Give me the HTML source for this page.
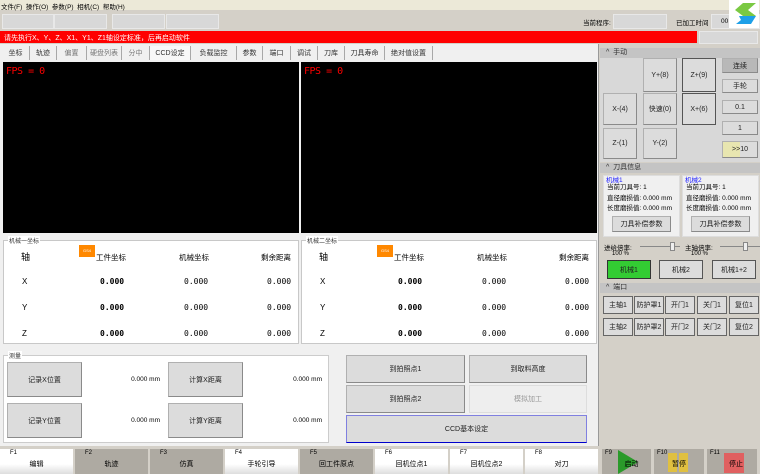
<!DOCTYPE html>
<html><head><meta charset="utf-8"><style>
*{box-sizing:border-box;margin:0;padding:0}
body{width:760px;height:474px;overflow:hidden;background:#d4d0c8;font-family:"Liberation Sans","Noto Sans CJK SC",sans-serif;font-size:7px;color:#000;position:relative}
.a{position:absolute}
.box{position:absolute;background:#d8d8d8;border:1px solid #e8e8e8}
.btn{position:absolute;background:#dcdcdc;border:1px solid #8a8a8a;border-top-color:#b0b0b0;border-left-color:#b0b0b0;display:flex;align-items:center;justify-content:center;font-size:7px;color:#222}
.tab{position:absolute;top:46px;height:14px;border-right:1px solid #a8a8a8;display:flex;align-items:center;justify-content:center;font-size:7px;color:#333}
.vid{position:absolute;background:#000;top:62px;height:171px}
.fps{position:absolute;left:3px;top:4px;color:#f00;font-size:10px;font-family:"DejaVu Sans Mono","Liberation Mono",monospace;letter-spacing:-0.5px}
.grp{position:absolute;border:1px solid #c8c8c8;background:#fff}
.gl{position:absolute;top:-5px;left:4px;background:#fff;font-size:6px;padding:0 1px;color:#333}
.mono{font-family:"DejaVu Sans Mono","Liberation Mono",monospace;font-size:8px;position:absolute}
.hd{position:absolute;left:600px;width:160px;height:10px;background:#c4c4c4;font-size:7px;padding-left:6px;line-height:10px;color:#333}
.f{position:absolute;top:449px;height:25px;width:73px;font-size:7px}
.fw{background:linear-gradient(#fff 60%,#ddd)}
.fg{background:#aeaaa2}
.f span{position:absolute;left:10px;top:1px;font-size:6px}
.f b{font-weight:normal;position:absolute;top:10px;left:0;right:0;text-align:center}
</style></head><body>
<div class="a" style="left:0;top:0;width:760px;height:10px;background:#ece9d8"></div>
<div class="a" style="left:1px;top:1px;font-size:6.5px;white-space:nowrap">文件(F)&nbsp; 操作(O)&nbsp; 参数(P)&nbsp; 相机(C)&nbsp; 帮助(H)</div>
<div class="box" style="left:2px;top:14px;width:52px;height:15px"></div>
<div class="box" style="left:54px;top:14px;width:53px;height:15px"></div>
<div class="box" style="left:112px;top:14px;width:53px;height:15px"></div>
<div class="box" style="left:166px;top:14px;width:53px;height:15px"></div>
<div class="a" style="left:583px;top:17px;font-size:6.5px">当前程序:</div>
<div class="box" style="left:613px;top:14px;width:54px;height:15px"></div>
<div class="a" style="left:676px;top:17px;font-size:6.5px">已加工时间</div>
<div class="box" style="left:711px;top:14px;width:49px;height:15px;font-size:6.5px;padding:3px 0 0 9px">00</div>
<div class="a" style="left:729px;top:0;width:30px;height:28px;background:#fff"></div>
<svg class="a" style="left:733px;top:3px" width="23" height="22"><polygon points="10,0 23,0 15,7 23,13 10,13 2,7" fill="#7ac943"/><polygon points="6,13 23,13 18,21 3,21 8,17" fill="#1ea0e8"/></svg>
<div class="a" style="left:0;top:31px;width:697px;height:12px;background:#f00;color:#fff;font-size:7px;padding:2px 0 0 4px">请先执行X、Y、Z、X1、Y1、Z1轴设定标准，后再启动软件</div>
<div class="box" style="left:699px;top:31px;width:59px;height:13px"></div>
<div class="a" style="left:0;top:44px;width:599px;height:402px;background:#f0f0f0;border-right:1px solid #999"></div>
<div class="tab" style="left:2px;width:28px">坐标</div>
<div class="tab" style="left:30px;width:27px">轨迹</div>
<div class="tab" style="left:57px;width:30px;color:#777">偏置</div>
<div class="tab" style="left:87px;width:35px;color:#777">硬盘列表</div>
<div class="tab" style="left:122px;width:28px;color:#777">分中</div>
<div class="tab" style="left:150px;width:41px;background:#f8f8f8">CCD设定</div>
<div class="tab" style="left:191px;width:46px">负载监控</div>
<div class="tab" style="left:237px;width:26px">参数</div>
<div class="tab" style="left:263px;width:28px">端口</div>
<div class="tab" style="left:291px;width:27px">调试</div>
<div class="tab" style="left:318px;width:27px">刀库</div>
<div class="tab" style="left:345px;width:40px">刀具寿命</div>
<div class="tab" style="left:385px;width:48px">绝对值设置</div>
<div class="vid" style="left:3px;width:296px"><div class="fps">FPS = 0</div></div>
<div class="vid" style="left:301px;width:296px"><div class="fps">FPS = 0</div></div>
<div class="grp" style="left:3px;top:240px;width:296px;height:104px"><div class="gl">机械一坐标</div></div>
<div class="grp" style="left:301px;top:240px;width:296px;height:104px"><div class="gl">机械二坐标</div></div>
<div id="c"></div>
<div class="grp" style="left:3px;top:355px;width:326px;height:88px;border-color:#ccc"><div class="gl">测量</div></div>
<div class="btn" style="left:7px;top:362px;width:75px;height:35px">记录X位置</div>
<div class="btn" style="left:7px;top:403px;width:75px;height:35px">记录Y位置</div>
<div class="btn" style="left:168px;top:362px;width:75px;height:35px">计算X距离</div>
<div class="btn" style="left:168px;top:403px;width:75px;height:35px">计算Y距离</div>
<div class="a" style="left:100px;top:376px;width:60px;text-align:right;font-size:6.5px">0.000 mm</div>
<div class="a" style="left:100px;top:417px;width:60px;text-align:right;font-size:6.5px">0.000 mm</div>
<div class="a" style="left:262px;top:376px;width:60px;text-align:right;font-size:6.5px">0.000 mm</div>
<div class="a" style="left:262px;top:417px;width:60px;text-align:right;font-size:6.5px">0.000 mm</div>
<div class="btn" style="left:346px;top:355px;width:119px;height:28px">到拍照点1</div>
<div class="btn" style="left:469px;top:355px;width:118px;height:28px">到取料高度</div>
<div class="btn" style="left:346px;top:385px;width:119px;height:28px">到拍照点2</div>
<div class="btn" style="left:469px;top:385px;width:118px;height:28px;background:#eee;border-color:#ddd;color:#999">模拟加工</div>
<div class="btn" style="left:346px;top:415px;width:241px;height:28px;border:1px solid #8080e0;border-bottom-color:#00c">CCD基本设定</div>
<div class="hd" style="top:48px">^&nbsp; 手动</div>
<div class="a" style="left:600px;top:58px;width:160px;height:104px;background:#d8d8d8"></div>
<div class="btn" style="left:643px;top:58px;width:34px;height:34px">Y+(8)</div>
<div class="btn" style="left:682px;top:58px;width:34px;height:34px;border-color:#555">Z+(9)</div>
<div class="btn" style="left:722px;top:58px;width:36px;height:15px;background:#b8b8b8">连续</div>
<div class="btn" style="left:722px;top:79px;width:36px;height:14px">手轮</div>
<div class="btn" style="left:603px;top:93px;width:34px;height:32px">X-(4)</div>
<div class="btn" style="left:643px;top:93px;width:34px;height:32px">快速(0)</div>
<div class="btn" style="left:682px;top:93px;width:34px;height:32px;border-color:#555">X+(6)</div>
<div class="btn" style="left:722px;top:100px;width:36px;height:14px">0.1</div>
<div class="btn" style="left:722px;top:121px;width:36px;height:14px">1</div>
<div class="btn" style="left:603px;top:128px;width:34px;height:31px">Z-(1)</div>
<div class="btn" style="left:643px;top:128px;width:34px;height:31px">Y-(2)</div>
<div class="btn" style="left:722px;top:141px;width:36px;height:17px;background:linear-gradient(90deg,#e8e6b0 50%,#dcdcdc 50%)">&gt;&gt;10</div>
<div class="hd" style="top:163px">^&nbsp; 刀具信息</div>
<div class="a" style="left:603px;top:175px;width:77px;height:62px;background:#f0f0f0;border:1px solid #ddd"></div>
<div class="a" style="left:682px;top:175px;width:77px;height:62px;background:#f0f0f0;border:1px solid #ddd"></div>
<div class="a" style="left:606px;top:174px;font-size:6.5px;color:#22f">机械1</div>
<div class="a" style="left:685px;top:174px;font-size:6.5px;color:#22f">机械2</div>
<div class="a" style="left:607px;top:183px;font-size:6.5px;line-height:10.5px">当前刀具号: 1<br>直径磨损值: 0.000 mm<br>长度磨损值: 0.000 mm</div>
<div class="a" style="left:686px;top:183px;font-size:6.5px;line-height:10.5px">当前刀具号: 1<br>直径磨损值: 0.000 mm<br>长度磨损值: 0.000 mm</div>
<div class="btn" style="left:612px;top:216px;width:59px;height:16px">刀具补偿参数</div>
<div class="btn" style="left:691px;top:216px;width:59px;height:16px">刀具补偿参数</div>
<div class="a" style="left:604px;top:242px;font-size:6.5px">进给倍率:</div>
<div class="a" style="left:612px;top:251px;font-size:6px">100 %</div>
<div class="a" style="left:640px;top:246px;width:40px;height:1px;background:#888"></div>
<div class="a" style="left:670px;top:242px;width:5px;height:9px;background:#eee;border:1px solid #888"></div>
<div class="a" style="left:685px;top:242px;font-size:6.5px">主轴倍率:</div>
<div class="a" style="left:691px;top:251px;font-size:6px">100 %</div>
<div class="a" style="left:720px;top:246px;width:40px;height:1px;background:#888"></div>
<div class="a" style="left:743px;top:242px;width:5px;height:9px;background:#eee;border:1px solid #888"></div>
<div class="btn" style="left:607px;top:260px;width:44px;height:19px;background:#33cc33;border-color:#333">机械1</div>
<div class="btn" style="left:659px;top:260px;width:44px;height:19px;border-color:#555">机械2</div>
<div class="btn" style="left:712px;top:260px;width:44px;height:19px;border-color:#555">机械1+2</div>
<div class="hd" style="top:283px">^&nbsp; 端口</div>
<div id="p"></div>
<div class="a" style="left:0;top:446px;width:760px;height:28px;background:#d4d0c8"></div>
<div class="f fw" style="left:0"><span>F1</span><b>编辑</b></div>
<div class="f fg" style="left:75px"><span>F2</span><b>轨迹</b></div>
<div class="f fg" style="left:150px"><span>F3</span><b>仿真</b></div>
<div class="f fw" style="left:225px"><span>F4</span><b>手轮引导</b></div>
<div class="f fg" style="left:300px"><span>F5</span><b>回工件原点</b></div>
<div class="f fw" style="left:375px"><span>F6</span><b>回机位点1</b></div>
<div class="f fw" style="left:450px"><span>F7</span><b>回机位点2</b></div>
<div class="f fw" style="left:525px"><span>F8</span><b>对刀</b></div>
<div class="f fg" style="left:602px;width:49px"><span style="left:3px">F9</span><svg class="a" style="left:16px;top:1px" width="20" height="24"><polygon points="0,0 20,12 0,24" fill="#2a9a2a"/></svg><b style="left:10px">启动</b></div>
<div class="f fg" style="left:654px;width:50px"><span style="left:3px">F10</span><div class="a" style="left:14px;top:4px;width:9px;height:19px;background:#e0c040"></div><div class="a" style="left:25px;top:4px;width:9px;height:19px;background:#e0c040"></div><b>暂停</b></div>
<div class="f fg" style="left:707px;width:50px"><span style="left:3px">F11</span><div class="a" style="left:17px;top:4px;width:20px;height:20px;background:#e06060"></div><b style="left:8px">停止</b></div>
<script>
var h='';
[[3,0],[301,1]].forEach(function(g){var x=g[0];
h+='<div class="a" style="left:'+(x+76)+'px;top:245px;width:16px;height:12px;background:#f80;color:#fff;font-size:4px;text-align:center;line-height:12px">GS4</div>';
h+='<div class="a" style="left:'+(x+18)+'px;top:250px;font-size:9px">轴</div>';
h+='<div class="a" style="left:'+(x+93)+'px;top:252px;font-size:7.5px">工件坐标</div>';
h+='<div class="a" style="left:'+(x+176)+'px;top:252px;font-size:7.5px">机械坐标</div>';
h+='<div class="a" style="left:'+(x+258)+'px;top:252px;font-size:7.5px">剩余距离</div>';
['X','Y','Z'].forEach(function(a,i){var y=277+i*26;
h+='<div class="a" style="left:'+(x+19)+'px;top:'+y+'px;font-size:8px">'+a+'</div>';
h+='<div class="mono" style="left:'+(x+97)+'px;top:'+y+'px;font-weight:bold">0.000</div>';
h+='<div class="mono" style="left:'+(x+181)+'px;top:'+y+'px">0.000</div>';
h+='<div class="mono" style="left:'+(x+264)+'px;top:'+y+'px">0.000</div>';});});
document.getElementById('c').outerHTML=h;
var p='',xs=[603,634,665,697,729],r1=['主轴1','防护罩1','开门1','关门1','复位1'],r2=['主轴2','防护罩2','开门2','关门2','复位2'];
xs.forEach(function(x,i){p+='<div class="btn" style="left:'+x+'px;top:296px;width:30px;height:18px;border-color:#666">'+r1[i]+'</div>';
p+='<div class="btn" style="left:'+x+'px;top:318px;width:30px;height:18px;border-color:#666">'+r2[i]+'</div>';});
document.getElementById('p').outerHTML=p;
</script>
</body></html>
